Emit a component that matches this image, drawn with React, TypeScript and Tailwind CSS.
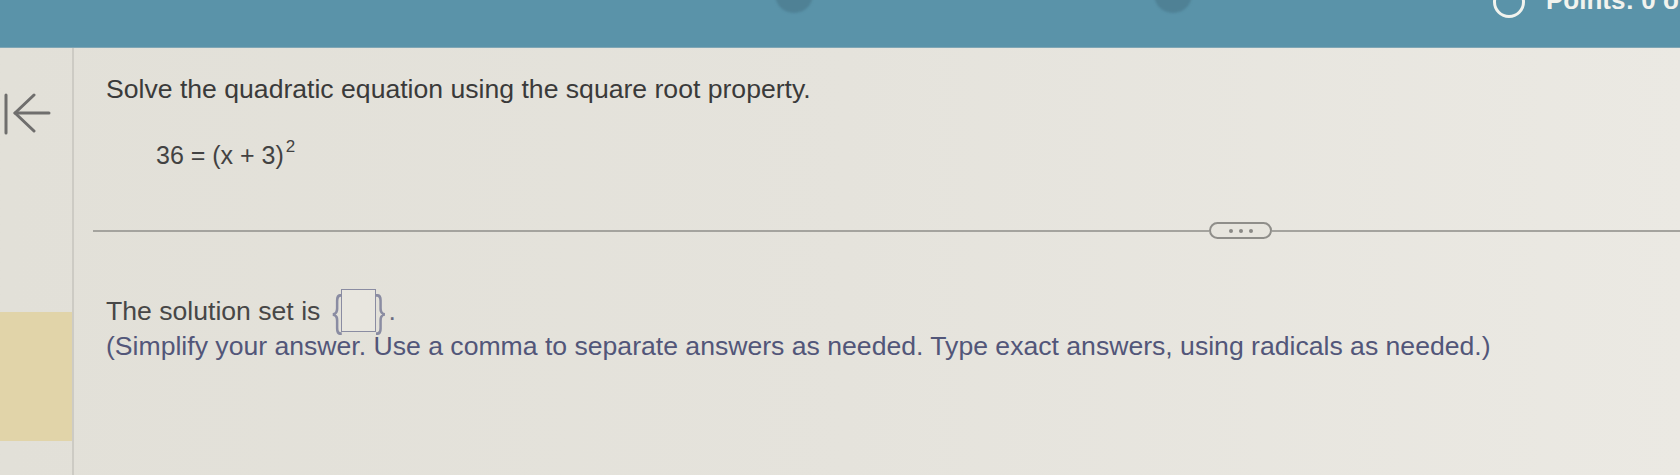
function BackArrow() {
  return (
    <svg width="52" height="42" viewBox="0 0 52 42" fill="none" stroke="#6f6e6d" strokeWidth="3" strokeLinecap="round" strokeLinejoin="round">
      <line x1="6" y1="2" x2="6" y2="40" />
      <line x1="15" y1="20" x2="49" y2="20" />
      <polyline points="34,2 15,20 34,38" />
    </svg>
  );
}

function AnswerBox() {
  return (
    <span className="inline-flex items-center h-[43px] text-[#8a8ca2]">
      <span className="text-[30px] leading-none font-light scale-y-[1.45] -mr-[1px]">{'{'}</span>
      <span className="w-[35px] h-[43px] border-[1.5px] border-[#8a8ca2] bg-[#e8e6df]" />
      <span className="text-[30px] leading-none font-light scale-y-[1.45] -ml-[1px]">{'}'}</span>
    </span>
  );
}

export default function App() {
  return (
    <div
      className="w-[1680px] h-[475px] overflow-hidden bg-gradient-to-r from-[#e2e0d8] via-[#e5e3dc] to-[#ebe9e3]"
      style={{ fontFamily: '"Liberation Sans", Arial, sans-serif' }}
    >
      <header className="flex items-start h-[48px] overflow-hidden bg-[#5a93a9] border-b border-[#7fa6b5]">
        <div className="ml-[775px] -mt-[25px] w-[38px] h-[38px] shrink-0 rounded-full bg-[#4f8195] blur-[1px]" />
        <div className="ml-[341px] -mt-[25px] w-[38px] h-[38px] shrink-0 rounded-full bg-[#4f8195] blur-[1px]" />
        <div className="ml-[301px] -mt-[14px] w-[32px] h-[32px] shrink-0 rounded-full border-[3px] border-[#f1f3ee]" />
        <div className="ml-[21px] -mt-[16px] text-[26px] leading-[32px] font-bold text-[#f1f3ee] whitespace-nowrap">
          Points: 0 of 1
        </div>
      </header>

      <div className="flex h-[427px]">
        <aside className="w-[74px] shrink-0 border-r-2 border-[#cdcbc4]">
          <div className="mt-[45px]">
            <BackArrow />
          </div>
          <div className="mt-[177px] w-[72px] h-[129px] bg-[#e1d4a9]" />
        </aside>

        <main className="flex-1 pl-[32px] pt-[25px] text-[26.6px]">
          <h1 className="leading-[32px] text-[#3a3a3a]">
            Solve the quadratic equation using the square root property.
          </h1>

          <div className="mt-[34px] pl-[50px] text-[25px] leading-[32px] text-[#424242] whitespace-nowrap">
            36 = (x + 3)<sup className="text-[17px] relative -top-[12px] ml-[2px]">2</sup>
          </div>

          <div className="mt-[51px] -ml-[13px] flex items-center h-[17px]">
            <div className="flex-1 h-[2px] bg-[#a4a39e]" />
            <button className="w-[63px] h-[17px] shrink-0 rounded-full border-2 border-[#8f8e8a] bg-[#e7e5de] flex items-center justify-center gap-[6px]">
              <span className="w-[4px] h-[4px] rounded-full bg-[#8a8986]" />
              <span className="w-[4px] h-[4px] rounded-full bg-[#8a8986]" />
              <span className="w-[4px] h-[4px] rounded-full bg-[#8a8986]" />
            </button>
            <div className="w-[408px] h-[2px] bg-[#a4a39e]" />
          </div>

          <div className="mt-[50px] flex items-center h-[43px] leading-[28px] text-[#474747]">
            <span>The solution set is</span>
            <span className="ml-[12px]">
              <AnswerBox />
            </span>
            <span className="ml-[3px] text-[#6a6c80]">.</span>
          </div>

          <p className="leading-[28px] text-[#525679] whitespace-nowrap">
            (Simplify your answer. Use a comma to separate answers as needed. Type exact answers, using radicals as needed.)
          </p>
        </main>
      </div>
    </div>
  );
}
